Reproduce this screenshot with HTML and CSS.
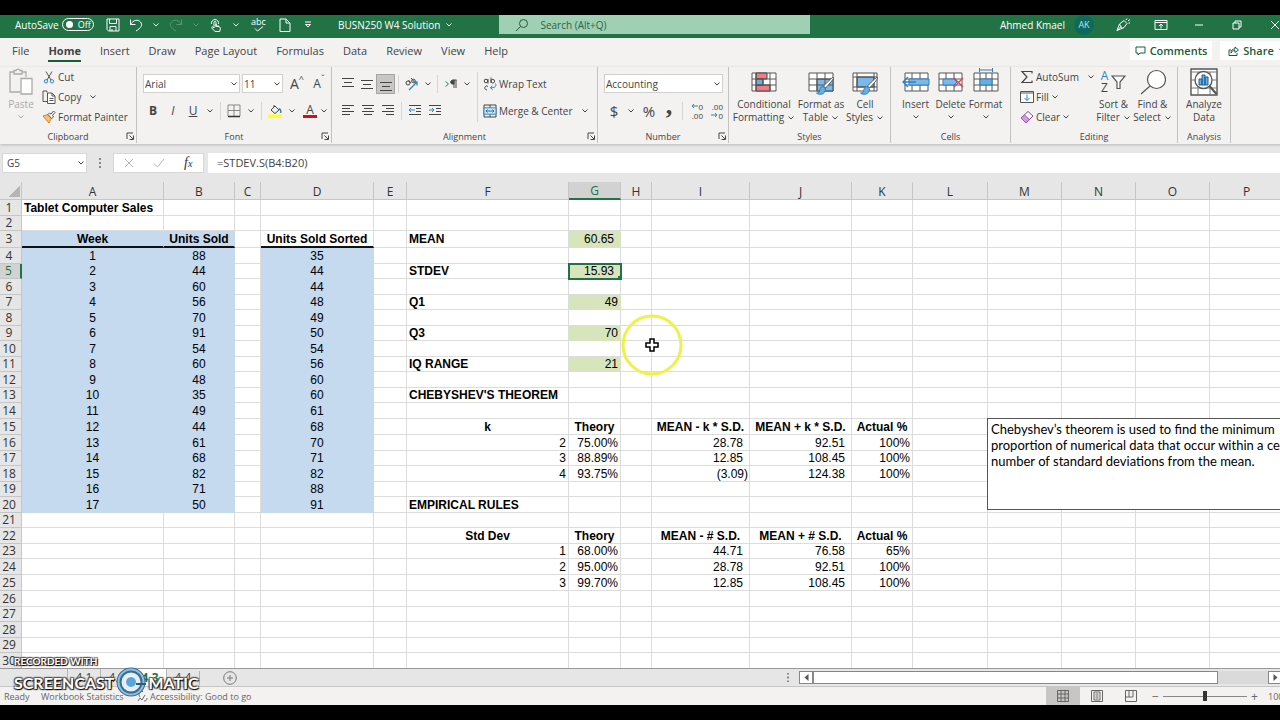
FILE: index.html
```html
<!DOCTYPE html>
<html lang="en">
<head>
    <meta charset="UTF-8">
    <meta name="viewport" content="width=device-width, initial-scale=1.0">
    <title>BUSN250 W4 Solution</title>
    <link rel="stylesheet" href="styles.css">
    <script src="script.js" defer></script>
</head>
<body>
    <!-- Shared icons -->
    <svg class="defs" aria-hidden="true">
        <symbol id="chev" viewBox="0 0 8 6"><path d="M1.5 1.5 4 4l2.500-2.500" fill="none" stroke="currentColor"/></symbol>
        <symbol id="launch" viewBox="0 0 9 9"><path d="M1 7V1h6M3.500 3.500 7 7M7.500 3.500v4h-4" fill="none" stroke="currentColor"/></symbol>
        <symbol id="brush" viewBox="0 0 20 20"><path d="M18.500 1.500c1 1-6 8.500-8 10.500l-2-2c2-2 9-9.500 10-8.500Z" fill="#fff" stroke="#555"/><path d="M8 10.500c-3 0-3 3-3.500 5-.5 1.500-2 1.500-3 1.500 3 2.500 9 1.500 9-4Z" fill="#6aaee0" stroke="#2f7fc1"/></symbol>
    </svg>

    <div class="app">
        <header class="titlebar">
            <label class="autosave">AutoSave <input type="checkbox" class="switch"><span class="pill"><i></i>Off</span></label>
            <div class="quick">
                <button class="q" aria-label="Save"><svg width="14" height="14" viewBox="0 0 14 14"><path d="M1 1h12v12H2.500L1 11.500ZM3.500 1v4.500h7V1M4 13V8.500h6V13M6 13v-2"/></svg></button>
                <button class="q" aria-label="Undo"><svg width="14" height="14" viewBox="0 0 14 14"><path d="M1.500 1.500v5h5M1.500 6.500C4 2 9 1 11.500 4s.5 6-4.500 9"/></svg></button>
                <button class="q slim" aria-label="Undo list"><svg width="8" height="6"><use href="#chev"/></svg></button>
                <button class="q dim" aria-label="Redo"><svg width="14" height="14" viewBox="0 0 14 14"><path d="M12.500 1.500v5h-5M12.500 6.500C10 2 5 1 2.500 4s-.5 6 4.500 9"/></svg></button>
                <button class="q slim dim" aria-label="Redo list"><svg width="8" height="6"><use href="#chev"/></svg></button>
                <button class="q" aria-label="Touch mode"><svg width="14" height="14" viewBox="0 0 14 14"><path d="M5 10V4.500c0-1.500 2-1.500 2 0V8l3.500 1c1 .3 1 1 .8 2l-.6 2.500H6L2.800 10c-.5-1 .7-1.500 1.200-1ZM2.500 6a3.600 3.600 0 1 1 7 0M7 6v3M9 7v2"/></svg></button>
                <button class="q slim" aria-label="Touch mode list"><svg width="8" height="6"><use href="#chev"/></svg></button>
                <button class="q spell" aria-label="Spelling"><span>abc</span><svg width="10" height="6" viewBox="0 0 10 6"><path d="M1 2.500 3.500 5 9 .5"/></svg></button>
                <button class="q" aria-label="New file"><svg width="14" height="14" viewBox="0 0 14 14"><path d="M2 1h6l4 4v8.500H2ZM8 1v4h4"/></svg></button>
                <button class="q" aria-label="Customize toolbar"><svg width="10" height="8" viewBox="0 0 10 8"><path d="M2 1h6M2.500 3.500 5 6l2.500-2.500Z"/></svg></button>
            </div>
            <button class="doc">BUSN250 W4 Solution <svg width="8" height="6"><use href="#chev"/></svg></button>
            <label class="search">
                <svg width="14" height="14" viewBox="0 0 14 14"><circle cx="8.500" cy="5.500" r="4" /><path d="M5.500 8.500 1 13"/></svg>
                <input type="search" placeholder="Search (Alt+Q)" aria-label="Search">
            </label>
            <div class="account">
                <span>Ahmed Kmael</span><span class="avatar">AK</span>
                <button class="w" aria-label="Draw"><svg width="16" height="14" viewBox="0 0 16 14"><path d="M2 12.500 4.500 6 9 2.500l3 3L9 9.500ZM4.500 6 7 11M2 12.500l4-4M11 2l1-1.500M13 3l2-1.500M13.500 5H15"/></svg></button>
                <button class="w" aria-label="Ribbon display"><svg width="14" height="12" viewBox="0 0 14 12"><path d="M1 1.500h12v9H1ZM1 3.500h12M7 9.500V5.500M5 7l2-2 2 2"/></svg></button>
                <button class="w" aria-label="Minimize"><svg width="10" height="10" viewBox="0 0 10 10"><path d="M1 5h8"/></svg></button>
                <button class="w" aria-label="Restore"><svg width="10" height="10" viewBox="0 0 10 10"><path d="M1 3h6v6H1ZM3 3V1h6v6H7"/></svg></button>
                <button class="w" aria-label="Close"><svg width="10" height="10" viewBox="0 0 10 10"><path d="m1 1 8 8M9 1 1 9"/></svg></button>
            </div>
        </header>

        <nav class="menu">
            <a href="#">File</a>
            <a href="#" class="active">Home</a>
            <a href="#">Insert</a>
            <a href="#">Draw</a>
            <a href="#">Page Layout</a>
            <a href="#">Formulas</a>
            <a href="#">Data</a>
            <a href="#">Review</a>
            <a href="#">View</a>
            <a href="#">Help</a>
            <button class="pillbtn comments"><svg width="11" height="10" viewBox="0 0 11 10"><path d="M1 1h9v6H5L3 9V7H1Z"/></svg>Comments</button>
            <button class="pillbtn share"><svg width="11" height="10" viewBox="0 0 11 10"><path d="M3 4H1v5.500h8V7M3 7c0-3 1.500-4 4-4V1l3.500 3L7 6.500v-2C5 4.500 4 5.500 3 7Z"/></svg>Share <svg width="8" height="6"><use href="#chev"/></svg></button>
        </nav>

        <div class="ribbon">
            <section class="group clipboard">
                <div class="tools">
                    <button class="big dim"><svg width="26" height="28" viewBox="0 0 26 28"><path d="M6 4H2v20h10M18 9V4h-4M6 2.500h2a2.200 2.200 0 0 1 4 0h2v3.500H6Z" fill="none" stroke="#aaa" stroke-width="1.300"/><path d="M13 10.500h11V26H13Z" fill="#fff" stroke="#aaa" stroke-width="1.300"/></svg>Paste<svg width="8" height="6"><use href="#chev"/></svg></button>
                    <div class="list">
                        <button><svg width="14" height="14" viewBox="0 0 14 14"><path d="M4 1.500 9 10M10 1.500 5 10" stroke="#555"/><circle cx="4" cy="11.300" r="1.700" stroke="#2e86c1"/><circle cx="10" cy="11.300" r="1.700" stroke="#2e86c1"/></svg>Cut</button>
                        <button><svg width="14" height="14" viewBox="0 0 14 14"><path d="M5 2.500V1H1v10.500h4" stroke="#555"/><path d="M5.500 3h4.500l3 3v7.500H5.500ZM10 3v3h3M7.500 8.500h4M7.500 10.500h4" fill="#fff" stroke="#555"/></svg>Copy<svg class="after" width="8" height="6"><use href="#chev"/></svg></button>
                        <button><svg width="14" height="14" viewBox="0 0 14 14"><path d="M1 6 6 4.500 9.500 8 7 13Z" fill="#f6c177" stroke="#d9822b"/><path d="m6 4.500 1.500-1.500 1.500 1.200L11.500 1l1.500 1.500-2.500 2.800L11.500 7 9.500 8.500Z" fill="#fff" stroke="#555"/></svg>Format Painter</button>
                    </div>
                </div>
                <footer><span>Clipboard</span><button aria-label="Clipboard options"><svg width="9" height="9"><use href="#launch"/></svg></button></footer>
            </section>

            <section class="group font">
                <div class="tools rows">
                    <div class="row">
                        <select class="wide" aria-label="Font"><option>Arial</option></select>
                        <select class="narrow" aria-label="Font size"><option>11</option></select>
                        <button class="ic letter" aria-label="Grow font">A<sup>^</sup></button>
                        <button class="ic letter small" aria-label="Shrink font">A<sup>ˇ</sup></button>
                    </div>
                    <div class="row">
                        <button class="ic"><b>B</b></button>
                        <button class="ic"><em>I</em></button>
                        <button class="ic"><u>U</u></button>
                        <button class="ch" aria-label="Underline list"><svg width="8" height="6"><use href="#chev"/></svg></button>
                        <i class="sep"></i>
                        <button class="ic" aria-label="Borders"><svg width="14" height="14" viewBox="0 0 14 14"><path d="M1 1h12v11M1 1v11M7 1v11M1 6.500h12" stroke="#888"/><path d="M1 12.500h12" stroke="#333" stroke-width="1.500"/></svg></button>
                        <button class="ch" aria-label="Borders list"><svg width="8" height="6"><use href="#chev"/></svg></button>
                        <i class="sep"></i>
                        <button class="ic" aria-label="Fill color"><svg width="14" height="14" viewBox="0 0 14 14"><path d="m3 6 4-4 4 4-4 3.500ZM6 3V1" stroke="#444"/><path d="M11 4.500c2 1 2 3 1.500 4.500" stroke="#2e86c1" stroke-width="1.500"/><path d="M0 10.500h14V14H0Z" fill="#ffff20" stroke="none"/></svg></button>
                        <button class="ch" aria-label="Fill list"><svg width="8" height="6"><use href="#chev"/></svg></button>
                        <button class="ic fontcolor">A</button>
                        <button class="ch" aria-label="Font color list"><svg width="8" height="6"><use href="#chev"/></svg></button>
                    </div>
                </div>
                <footer><span>Font</span><button aria-label="Font options"><svg width="9" height="9"><use href="#launch"/></svg></button></footer>
            </section>

            <section class="group align">
                <div class="tools">
                    <div class="rows left">
                        <div class="row">
                            <button class="ic" aria-label="Top align"><svg width="14" height="14" viewBox="0 0 14 14"><path d="M1 1.500h12M3 5.500h8M1 9.500h12"/></svg></button>
                            <button class="ic" aria-label="Middle align"><svg width="14" height="14" viewBox="0 0 14 14"><path d="M1 3.500h12M3 7.500h8M1 11.500h12"/></svg></button>
                            <button class="ic on" aria-label="Bottom align"><svg width="14" height="14" viewBox="0 0 14 14"><path d="M1 5.500h12M3 9.500h8M1 13.500h12"/></svg></button>
                            <i class="sep"></i>
                            <button class="ic" aria-label="Orientation"><svg width="15" height="14" viewBox="0 0 15 14"><circle cx="4" cy="6" r="2"/><path d="m4.500 3 2.500 3M7 1l4 4.500"/><circle cx="9.500" cy="4" r="1.800"/><path d="m5 13 8-8M9.500 5H13v3.500" stroke="#2e86c1" stroke-width="1.300"/></svg></button>
                            <button class="ch" aria-label="Orientation list"><svg width="8" height="6"><use href="#chev"/></svg></button>
                            <i class="sep"></i>
                            <button class="ic" aria-label="Text direction"><svg width="14" height="12" viewBox="0 0 14 12"><path d="m1.500 3.500 3 2.500-3 2.500" stroke="#2e7a6f"/><path d="M12.500 2H9.500M10 2v8M12 2v8"/><path d="M10 2C5.500 1.500 5.500 7 10 6Z" fill="#444"/></svg></button>
                            <button class="ch" aria-label="Text direction list"><svg width="8" height="6"><use href="#chev"/></svg></button>
                        </div>
                        <div class="row">
                            <button class="ic" aria-label="Align left"><svg width="14" height="14" viewBox="0 0 14 14"><path d="M1 1.500h12M1 4.500h8M1 7.500h12M1 10.500h8"/></svg></button>
                            <button class="ic" aria-label="Align center"><svg width="14" height="14" viewBox="0 0 14 14"><path d="M1 1.500h12M3 4.500h8M1 7.500h12M3 10.500h8"/></svg></button>
                            <button class="ic" aria-label="Align right"><svg width="14" height="14" viewBox="0 0 14 14"><path d="M1 1.500h12M5 4.500h8M1 7.500h12M5 10.500h8"/></svg></button>
                            <i class="sep"></i>
                            <button class="ic" aria-label="Decrease indent"><svg width="14" height="14" viewBox="0 0 14 14"><path d="M1 1.500h12M8 4.500h5M8 7.500h5M1 10.500h12"/><path d="M7 6H1m2-2L1 6l2 2" stroke="#2e86c1"/></svg></button>
                            <button class="ic" aria-label="Increase indent"><svg width="14" height="14" viewBox="0 0 14 14"><path d="M1 1.500h12M8 4.500h5M8 7.500h5M1 10.500h12"/><path d="M1 6h5M4 4l2 2-2 2" stroke="#2e86c1"/></svg></button>
                        </div>
                    </div>
                    <i class="sep tall"></i>
                    <div class="rows right">
                        <button class="txt"><svg width="14" height="14" viewBox="0 0 14 14"><circle cx="3" cy="4" r="1.800"/><path d="M5 2v4.500M8 .5V6M5 9.500c-3-2-5 3-1 3.500"/><circle cx="9.800" cy="4.200" r="1.800"/><path d="M12.500 6.500c1.500 3.500-1.500 4.500-5 4.200m2-2.200-2 2.200 2 2.200" stroke="#2e86c1"/></svg>Wrap Text</button>
                        <button class="txt"><svg width="14" height="14" viewBox="0 0 14 14"><path d="M1 1h12v12H1ZM7 1v3M7 10v3"/><path d="M1 3.800h12v6.400H1Z" fill="#d3e7f5" stroke="#2e86c1"/><path d="M3 7h8M4.500 5.500 3 7l1.500 1.500M9.500 5.500 11 7 9.500 8.500" stroke="#1d6fa5"/></svg>Merge &amp; Center<svg class="after" width="8" height="6"><use href="#chev"/></svg></button>
                    </div>
                </div>
                <footer><span>Alignment</span><button aria-label="Alignment options"><svg width="9" height="9"><use href="#launch"/></svg></button></footer>
            </section>

            <section class="group number">
                <div class="tools rows">
                    <div class="row"><select aria-label="Number format"><option>Accounting</option></select></div>
                    <div class="row">
                        <button class="ic sym">$</button>
                        <button class="ch" aria-label="Currency list"><svg width="8" height="6"><use href="#chev"/></svg></button>
                        <button class="ic sym pct">%</button>
                        <button class="ic sym"><b class="comma">,</b></button>
                        <i class="sep"></i>
                        <button class="ic dec" aria-label="Increase decimal"><span><svg width="7" height="6" viewBox="0 0 7 6"><path d="M7 3H1m2-2L1 3l2 2"/></svg>0</span><span>.00</span></button>
                        <button class="ic dec" aria-label="Decrease decimal"><span>.00</span><span><svg width="7" height="6" viewBox="0 0 7 6"><path d="M0 3h6M4 1l2 2-2 2"/></svg>0</span></button>
                    </div>
                </div>
                <footer><span>Number</span><button aria-label="Number options"><svg width="9" height="9"><use href="#launch"/></svg></button></footer>
            </section>

            <section class="group styles">
                <div class="tools">
                    <button class="big"><svg width="26" height="28" viewBox="0 0 26 28"><path d="M1 5h24v18H1Z" fill="#fff" stroke="#555"/><path d="M5 5h11v6H5ZM5 17h14v6H5Z" fill="#f27a84"/><path d="M5 11h7v6H5Z" fill="#6aaee0"/><path d="M1 11h24M1 17h24M5 5v18M19 5v18M12 11v6" fill="none" stroke="#555"/></svg>Conditional<span>Formatting <svg width="8" height="6"><use href="#chev"/></svg></span></button>
                    <button class="big"><svg width="26" height="28" viewBox="0 0 26 28"><path d="M1 5h24v18H1Z" fill="#fff" stroke="#555"/><path d="M9 11h16v12H9Z" fill="#7db9e8"/><path d="M1 11h24M1 17h24M9 5v18M17 5v18" fill="none" stroke="#555"/><use href="#brush" x="7" y="8" width="20" height="20"/></svg>Format as<span>Table <svg width="8" height="6"><use href="#chev"/></svg></span></button>
                    <button class="big"><svg width="26" height="28" viewBox="0 0 26 28"><path d="M1 5h24v18H1Z" fill="#fff" stroke="#555"/><path d="M5 9h17v10H5Z" fill="#7db9e8"/><path d="M1 9h24M1 19h24M5 5v18M22 5v18" fill="none" stroke="#555"/><use href="#brush" x="7" y="8" width="20" height="20"/></svg>Cell<span>Styles <svg width="8" height="6"><use href="#chev"/></svg></span></button>
                </div>
                <footer><span>Styles</span></footer>
            </section>

            <section class="group cells">
                <div class="tools">
                    <button class="big"><svg width="28" height="28" viewBox="0 0 28 28"><path d="M3 5h23v18H3Z" fill="#fff" stroke="#555"/><path d="M3 11h23M3 17h23M10 5v18M18 5v18" fill="none" stroke="#555"/><path d="M7 11h20v6H7Z" fill="#7db9e8" stroke="#2f7fc1"/><path d="M14 14H1m5-5-5 5 5 5" fill="none" stroke="#2f7fc1" stroke-width="1.300"/></svg>Insert<svg width="8" height="6"><use href="#chev"/></svg></button>
                    <button class="big"><svg width="28" height="28" viewBox="0 0 28 28"><path d="M2 5h23v18H2Z" fill="#fff" stroke="#555"/><path d="M2 11h23M2 17h23M9 5v18M17 5v18" fill="none" stroke="#555"/><path d="M6 11h11l3 3-3 3H6Z" fill="#7db9e8" stroke="#2f7fc1"/><path d="m17 10 9 9M26 10l-9 9" fill="none" stroke="#d9434e" stroke-width="1.300"/></svg>Delete<svg width="8" height="6"><use href="#chev"/></svg></button>
                    <button class="big"><svg width="28" height="28" viewBox="0 0 28 28"><path d="M2 5h24v18H2Z" fill="#fff" stroke="#555"/><path d="M2 11h24M2 17h24M8 5v18M20 5v18M14 5v18" fill="none" stroke="#555"/><path d="M8 11h12v6H8Z" fill="#6aaee0" stroke="#2f7fc1"/><path d="M7.500 2h13M7.500 0v4M20.500 0v4" stroke="#2f7fc1"/></svg>Format<svg width="8" height="6"><use href="#chev"/></svg></button>
                </div>
                <footer><span>Cells</span></footer>
            </section>

            <section class="group editing">
                <div class="tools">
                    <div class="list">
                        <button><svg width="14" height="14" viewBox="0 0 14 14"><path d="M12 3.500V1.500H2l5 5.500-5 5.500h10v-2" stroke-width="1.200"/></svg>AutoSum<svg class="after" width="8" height="6"><use href="#chev"/></svg></button>
                        <button><svg width="14" height="14" viewBox="0 0 14 14"><path d="M.5 1.500h13v11H.5ZM.5 3h13" stroke="#555" fill="#fff"/><path d="M7 4.500v6M4.500 8 7 10.500 9.500 8" stroke="#2e86c1"/></svg>Fill <svg width="8" height="6"><use href="#chev"/></svg></button>
                        <button><svg width="14" height="14" viewBox="0 0 14 14"><path d="m1 8 7-6.500L13 6l-7 7Z" fill="#fff" stroke="#7d4a8e"/><path d="m1 8 3.500-3 4.800 4.500L6 13Z" fill="#d59be0" stroke="#a14fb8"/></svg>Clear <svg width="8" height="6"><use href="#chev"/></svg></button>
                    </div>
                    <button class="big"><span class="sortfilter"><span class="az"><b>A</b><b>Z</b></span><svg width="15" height="16" viewBox="0 0 15 16"><path d="M1 2h13L9 8v6.500H6V8Z" fill="#fff" stroke="#555" stroke-width="1.200"/></svg></span>Sort &amp;<span>Filter <svg width="8" height="6"><use href="#chev"/></svg></span></button>
                    <button class="big"><svg width="26" height="28" viewBox="0 0 26 28"><circle cx="16.500" cy="11.500" r="9" fill="#fff" stroke="#555" stroke-width="1.200"/><path d="M10 18 1 26" stroke="#555" stroke-width="1.200"/></svg>Find &amp;<span>Select <svg width="8" height="6"><use href="#chev"/></svg></span></button>
                </div>
                <footer><span>Editing</span></footer>
            </section>

            <section class="group analysis">
                <div class="tools">
                    <button class="big"><svg width="28" height="28" viewBox="0 0 28 28"><path d="M1 1h26v26H1Z" fill="#fff" stroke="#555" stroke-width="1.400"/><path d="M1 4h26M1 12h26M1 20h26M8 4v23M20 4v23" stroke="#777" fill="none"/><circle cx="13.500" cy="12" r="8.500" fill="#fff" stroke="#555" stroke-width="1.300"/><path d="M9 11h3v6H9ZM12 7h3v10h-3ZM15 9h3v8h-3Z" fill="#6aaee0" stroke="#1f5f94"/><path d="m19.500 18 7 8" stroke="#555" stroke-width="2"/></svg>Analyze<span>Data</span></button>
                </div>
                <footer><span>Analysis</span></footer>
            </section>
        </div>

        <div class="formulabar">
            <select class="namebox" aria-label="Name box"><option>G5</option></select>
            <span class="dots"></span>
            <div class="fx">
                <button aria-label="Cancel"><svg width="10" height="10" viewBox="0 0 10 10"><path d="m1 1 8 8M9 1 1 9"/></svg></button>
                <button aria-label="Enter"><svg width="12" height="10" viewBox="0 0 12 10"><path d="m1 5.500 3.500 3.500L11 1"/></svg></button>
                <button class="fn" aria-label="Insert function"><em>f<small>x</small></em></button>
            </div>
            <input class="formula" value="=STDEV.S(B4:B20)" aria-label="Formula">
        </div>

        <main class="sheet">
            <table class="grid">
                <colgroup>
                    <col class="c-row"><col class="c-a"><col class="c-b"><col class="c-c"><col class="c-d"><col class="c-e"><col class="c-f"><col class="c-g"><col class="c-h"><col class="c-i"><col class="c-j"><col class="c-k"><col class="c-l"><col span="4" class="c-std">
                </colgroup>
                <thead><tr id="letters"></tr></thead>
                <tbody id="cells"></tbody>
            </table>
            <p class="textbox">Chebyshev’s theorem is used to find the minimum<br>proportion of numerical data that occur within a certain<br>number of standard deviations from the mean.</p>
            <svg class="cursor" width="62" height="62" viewBox="0 0 62 62" aria-hidden="true">
                <circle cx="31" cy="31" r="29" fill="none" stroke="#f0f04a" stroke-width="3"/>
                <path d="M29 25h4v4h4v4h-4v4h-4v-4h-4v-4h4Z" fill="#fff" stroke="#000" stroke-width="1.500"/>
            </svg>
        </main>

        <div class="tabbar">
            <a href="#">4.1</a>
            <a href="#">4.2</a>
            <a href="#" class="active">4.3</a>
            <a href="#">4.4</a>
            <button class="add" aria-label="New sheet"><svg width="14" height="14" viewBox="0 0 14 14"><circle cx="7" cy="7" r="6.300"/><path d="M7 4v6M4 7h6"/></svg></button>
            <span class="dots"></span>
            <div class="scroll">
                <button aria-label="Scroll left"><svg width="5" height="7" viewBox="0 0 5 7"><path d="M4.500 0v7L.5 3.500Z"/></svg></button>
                <span class="thumb"></span>
                <button class="end" aria-label="Scroll right"><svg width="5" height="7" viewBox="0 0 5 7"><path d="M.5 0v7l4-3.500Z"/></svg></button>
            </div>
        </div>

        <footer class="status">
            <span class="ready">Ready</span>
            <span class="stats">Workbook Statistics</span>
            <span class="access"><svg width="12" height="12" viewBox="0 0 12 12"><path d="M7 1.500C3 1 2 5 4 7M2 3l2-1M2 11l2-3 2 2 3-5M8 11c2 0 3-1 3-3"/></svg>Accessibility: Good to go</span>
            <div class="views">
                <button class="on" aria-label="Normal view"><svg width="12" height="12" viewBox="0 0 12 12"><path d="M.5.5h11v11H.5ZM.5 4h11M.5 8h11M4 .5v11M8 .5v11"/></svg></button>
                <button aria-label="Page layout view"><svg width="12" height="12" viewBox="0 0 12 12"><path d="M.5.5h11v11H.5Z"/><path d="M3 2h6v8H3ZM4.500 4h3M4.500 6h3M4.500 8h3"/></svg></button>
                <button aria-label="Page break view"><svg width="12" height="12" viewBox="0 0 12 12"><path d="M.5.500h11v11H.5ZM4 .5V7h4V.5M.5 7H4"/></svg></button>
            </div>
            <div class="zoom"><button aria-label="Zoom out">−</button><input type="range" min="0" max="200" value="100" aria-label="Zoom"><button aria-label="Zoom in">+</button><span>100%</span></div>
        </footer>
    </div>

    <div class="watermark">
        <small>RECORDED WITH</small>
        <div><span>SCREENCAST</span><svg width="30" height="30" viewBox="0 0 30 30"><circle cx="15" cy="15" r="12" fill="#e4eef5" stroke="#3a6d90" stroke-width="5"/><circle cx="15" cy="15" r="12.500" fill="none" stroke="#8ebfe0" stroke-width="2"/><circle cx="15" cy="15" r="5.500" fill="#5aa5dc"/><path d="M20 17h10" stroke="#2d5d7d" stroke-width="2"/></svg><span>MATIC</span></div>
    </div>
</body>
</html>
```
FILE: styles.css
```css
* {
    box-sizing: border-box;
}
body {
    margin: 0;
    padding: 15px 0;
    height: 100vh;
    background: #000;
    overflow: hidden;
    font-family: "Open Sans", "Noto Sans", sans-serif;
    font-size: 10px;
    color: #444;
}
button, input, select {
    font: inherit;
    color: inherit;
    background: none;
    border: 0;
    margin: 0;
    padding: 0;
}
button {
    display: flex;
    align-items: center;
    justify-content: center;
    white-space: nowrap;
}
a {
    color: inherit;
    text-decoration: none;
}
svg {
    display: block;
    flex: none;
    fill: none;
    stroke: currentColor;
}
.defs {
    position: absolute;
    width: 0;
    height: 0;
}
/* the window runs a little past the right edge of the screen */
.app {
    display: flex;
    flex-direction: column;
    width: calc(100% + 14px);
    height: 100%;
    background: #e6e6e6;
}

/* Title bar */
.titlebar {
    display: flex;
    align-items: center;
    height: 23px;
    padding-left: 15px;
    background: #217346;
    color: #fff;
    padding-bottom: 4px;
}
.autosave {
    display: flex;
    align-items: center;
    gap: 3px;
    width: 86px;
}
.switch {
    position: absolute;
    opacity: 0;
}
.pill {
    display: flex;
    align-items: center;
    gap: 5px;
    width: 32px;
    height: 13px;
    padding-left: 3px;
    border: 1px solid #fff;
    border-radius: 7px;
    font-size: 9px;
}
.pill i {
    width: 7px;
    height: 7px;
    border-radius: 50%;
    background: #fff;
}
.quick {
    display: flex;
    align-items: center;
    width: 237px;
}
.q {
    width: 23px;
    height: 18px;
}
.q.slim {
    width: 17px;
}
.q.dim {
    opacity: 0.25;
}
.spell {
    flex-direction: column;
    width: 29px;
    font-size: 9px;
    line-height: 8px;
}
.doc {
    gap: 5px;
}
.search {
    display: flex;
    align-items: center;
    gap: 11px;
    width: 311px;
    height: 19px;
    margin-left: 46px;
    padding-left: 16px;
    background: #a0d0b4;
    color: #1f5a3a;
}
.search input {
    flex: 1;
    outline: none;
}
.search input::placeholder {
    color: #2b6446;
    opacity: 1;
}
.account {
    display: flex;
    align-items: center;
    margin-left: auto;
}
.avatar {
    width: 20px;
    margin: 0 10px 0 9px;
    border-radius: 50%;
    background: #0b6a5b;
    color: #b8e6ea;
    font-size: 9px;
    line-height: 20px;
    text-align: center;
}
.w {
    width: 38px;
    height: 18px;
}

/* Menu */
.menu {
    display: flex;
    align-items: center;
    gap: 19px;
    height: 29px;
    padding-left: 12px;
    padding-bottom: 4px;
    background: #f3f2f1;
    font-size: 11px;
}
.menu a {
    padding: 3px 0 1px;
    border-bottom: 2px solid transparent;
    line-height: 16px;
}
.menu .active {
    font-weight: bold;
    border-color: #185c37;
}
.pillbtn {
    gap: 4px;
    height: 19px;
    background: #fff;
    color: #185c37;
    font-weight: 600;
}
.comments {
    width: 82px;
    margin-left: auto;
}
.share {
    width: 74px;
    margin-left: -11px;
}

/* Ribbon */
.ribbon {
    display: flex;
    height: 77px;
    background: #f3f2f1;
    box-shadow: 0 1px 3px #bbb;
    position: relative;
}
.group {
    display: flex;
    flex-direction: column;
    border-right: 1px solid #c4c2c0;
    margin-bottom: 1px;
}
.tools {
    display: flex;
    flex: 1;
}
.group footer {
    display: flex;
    height: 13px;
    line-height: 13px;
    font-size: 9px;
}
.group footer span {
    flex: 1;
    text-align: center;
}
.group footer button {
    width: 12px;
    margin-left: -12px;
}
.clipboard { width: 137px; }
.font { width: 195px; }
.align { width: 266px; }
.number { width: 131px; }
.styles { width: 162px; }
.cells { width: 120px; }
.editing { width: 167px; }
.analysis { width: 53px; }

.big {
    flex-direction: column;
    justify-content: flex-start;
    padding-top: 1px;
    line-height: 13px;
    text-align: center;
}
.big > svg:first-child {
    margin-bottom: 2px;
}
.big > span {
    display: flex;
    align-items: center;
    gap: 3px;
}
.big.dim {
    width: 42px;
    color: #aaa;
}
.big > svg:last-child {
    margin-top: 3px;
}
.list {
    display: flex;
    flex-direction: column;
}
.list button {
    justify-content: flex-start;
    height: 20px;
    gap: 2px;
}
.after {
    margin-left: 6px;
}
.rows {
    display: flex;
    flex-direction: column;
    padding-top: 3px;
}
.row {
    display: flex;
    align-items: center;
    height: 27px;
}
.font .rows {
    padding-left: 6px;
}
.ribbon select {
    height: 19px;
    padding-left: 1px;
    border: 1px solid #d2d0ce;
}
select {
    appearance: none;
    background: #fff url("data:image/svg+xml,%3Csvg xmlns='http://www.w3.org/2000/svg' width='8' height='6'%3E%3Cpath d='M1.500 1.500 4 4l2.500-2.500' fill='none' stroke='%23444'/%3E%3C/svg%3E") no-repeat right 1px center;
}
.wide {
    width: 97px;
    margin-right: 2px;
}
.narrow {
    width: 41px;
    margin-right: 3px;
}
.ic {
    width: 20px;
    height: 20px;
    font-size: 12px;
}
.ch {
    width: 14px;
    height: 20px;
}
.letter {
    width: 22px;
    font-size: 14px;
}
.letter.small {
    font-size: 12px;
}
.letter sup {
    align-self: flex-start;
    font-size: 9px;
    line-height: 10px;
}
.sep {
    width: 1px;
    height: 18px;
    margin: 0 3px;
    background: #d8d6d4;
}
.sep.tall {
    height: 50px;
    margin-top: 5px;
}
.fontcolor {
    width: 14px;
    height: 14px;
    margin-left: 4px;
    border-bottom: 3px solid #d60c1a;
    line-height: 11px;
}
.left {
    width: 142px;
    padding-left: 6px;
}
.on {
    background: #c8c6c4;
}
.ic.on {
    width: 19px;
    border: 1px solid #a6a4a2;
}
.right {
    padding-left: 2px;
}
.txt {
    justify-content: flex-start;
    gap: 2px;
    height: 27px;
}
.number .rows {
    padding-left: 6px;
}
.number select {
    width: 119px;
}
.sym {
    font-size: 15px;
}
.pct {
    margin-left: 1px;
}
.comma {
    font-family: "Liberation Serif", serif;
    font-size: 26px;
    line-height: 10px;
    padding-bottom: 10px;
}
.dec {
    flex-direction: column;
    align-items: flex-end;
    padding-right: 3px;
    font-size: 8px;
    line-height: 9px;
}
.dec span {
    display: flex;
    align-items: center;
    height: 9px;
}
.dec svg {
    stroke: #2e8a9a;
}
.styles .tools, .cells .tools {
    justify-content: center;
}
.styles .big {
    width: 44px;
}
.styles .big:first-child {
    width: 64px;
    margin-right: 3px;
}
.cells .big {
    width: 35px;
}
.editing .tools {
    padding-left: 9px;
}
.editing .list {
    width: 74px;
}
.editing .big {
    width: 39px;
}
.sortfilter {
    height: 28px;
    margin-bottom: 2px;
}
.az {
    display: flex;
    flex-direction: column;
    font-size: 12px;
    line-height: 12px;
}
.az b {
    font-weight: normal;
}
.az b:first-child {
    color: #2e86c1;
}
.analysis .tools {
    justify-content: center;
}

/* Formula bar */
.formulabar {
    display: flex;
    align-items: center;
    height: 38px;
    padding: 0 0 1px 2px;
}
.formulabar > * {
    height: 20px;
}
.namebox {
    width: 85px;
    padding-left: 4px;
    border: 1px solid #d8d8d8;
}
.dots {
    width: 26px;
    background: radial-gradient(circle, #888 1px, transparent 1px) center / 26px 4px;
    background-clip: content-box;
    padding: 4px 0;
}
.fx {
    display: flex;
    width: 91px;
    background: #fff;
    border: 1px solid #d8d8d8;
    color: #b5b5b5;
}
.fx button {
    flex: 1;
}
.fn {
    color: #333;
    font-family: "Liberation Serif", serif;
    font-size: 14px;
}
.fn small {
    font-size: 10px;
}
.formula {
    flex: 1;
    margin-left: 4px;
    padding-left: 9px;
    background: #fff;
    font-size: 11px;
}

/* Sheet */
.sheet {
    position: relative;
    flex: 1;
    min-height: 0;
    overflow: hidden;
}
.grid {
    table-layout: fixed;
    width: 1284px;
    border-collapse: separate;
    border-spacing: 0;
    background: #fff;
    color: #000;
    font-family: "Liberation Sans", Arial, sans-serif;
    font-size: 12px;
    line-height: 14px;
}
.c-row { width: 22px; }
.c-a { width: 142px; }
.c-b { width: 71px; }
.c-c { width: 26px; }
.c-d { width: 113px; }
.c-e { width: 33px; }
.c-f { width: 162px; }
.c-g { width: 52px; }
.c-h { width: 31px; }
.c-i { width: 98px; }
.c-j { width: 102px; }
.c-k { width: 61px; }
.c-l { width: 75px; }
.c-std { width: 74px; }

.grid th, .grid td {
    height: 15px;
    padding: 0 2px;
    border-right: 1px solid #dcdcdc;
    border-bottom: 1px solid #dcdcdc;
    white-space: nowrap;
    overflow: visible;
}
.grid th {
    padding: 0;
    background: #e6e6e6;
    border-color: #c6c6c6;
    color: #333;
    font-family: "Open Sans", sans-serif;
    font-weight: normal;
    text-align: center;
}
.grid tbody th {
    padding-right: 3px;
}
.grid thead th {
    height: 17px;
    padding-top: 2px;
}
.grid .corner {
    background: linear-gradient(135deg, transparent 50%, #b5b5b5 50%) 8px 3px / 12px 12px no-repeat #e6e6e6;
}
.grid tbody tr:nth-child(odd) > * { height: 15px; }
.grid tbody tr:nth-child(even) > * { height: 16px; }
.grid tbody tr:nth-child(10n+15) > * { height: 16px; }
.grid tbody tr:nth-child(1) > * { height: 16px; }
.grid tbody tr:nth-child(2) > * { height: 15px; }
.grid tbody tr:nth-child(3) > * { height: 17px; }

.grid th.sel {
    background: #d2d2d2;
    color: #217346;
}
.grid thead .sel {
    border-bottom: 2px solid #217346;
}
.grid tbody .sel {
    border-right: 2px solid #217346;
}
.grid .bold { font-weight: bold; }
.grid .center { text-align: center; }
.grid .num { text-align: right; }
.grid .acc { text-align: right; padding-right: 6px; }
.grid .neg { text-align: right; padding-right: 1px; }
.grid .blue { background: #c5d9ef; border-color: #c5d9ef; }
.grid .green { background: #d8e4bc; border-color: #d8e4bc; }
.grid .head { border-bottom: 2px solid #111; }
.grid .current {
    position: relative;
    outline: 2px solid #217346;
    outline-offset: -1px;
}
.current::after {
    content: "";
    position: absolute;
    right: -2px;
    bottom: -2px;
    width: 4px;
    height: 4px;
    background: #217346;
}
.textbox {
    position: absolute;
    left: 987px;
    top: 236px;
    width: 340px;
    height: 92px;
    margin: 0;
    padding: 2px 3px;
    background: #fff;
    border: 1px solid #555;
    color: #000;
    font-family: Lato, sans-serif;
    font-size: 13px;
    line-height: 16px;
    white-space: nowrap;
}
.cursor {
    position: absolute;
    left: 621px;
    top: 132px;
}

/* Sheet tabs */
.tabbar {
    display: flex;
    align-items: center;
    height: 19px;
    padding-left: 67px;
    border-top: 1px solid #999;
    border-bottom: 1px solid #c6c6c6;
    font-size: 12px;
}
.tabbar a {
    width: 33px;
    border-left: 1px solid #b5b5b5;
    line-height: 17px;
    text-align: center;
}
.tabbar .active {
    background: #fff;
    color: #217346;
    font-weight: bold;
}
.add {
    width: 60px;
    border-left: 1px solid #b5b5b5;
    color: #777;
}
.tabbar .dots {
    height: 17px;
    margin-left: auto;
}
.scroll {
    display: flex;
    width: 495px;
    height: 13px;
    margin-left: -2px;
    background: #dadada;
}
.scroll button {
    width: 14px;
    background: #fff;
    border: 1px solid #888;
}
.scroll svg {
    fill: #555;
    stroke: none;
}
.thumb {
    width: 405px;
    background: #fff;
    border: 1px solid #888;
}
.scroll .end {
    margin-left: auto;
    width: 26px;
    padding-right: 12px;
}

/* Status bar */
.status {
    display: flex;
    align-items: center;
    height: 18px;
    padding-left: 4px;
    background: #f3f2f1;
    font-size: 9px;
    color: #666;
}
.ready {
    width: 37px;
}
.stats {
    width: 95px;
}
.access {
    display: flex;
    gap: 2px;
}
.views {
    display: flex;
    margin-left: auto;
}
.views button {
    width: 34px;
    height: 18px;
}
.zoom {
    display: flex;
    align-items: center;
    width: 146px;
}
.zoom button {
    width: 15px;
    font-size: 12px;
}
.zoom span {
    margin-left: 6px;
}
.zoom input {
    appearance: none;
    width: 84px;
    height: 12px;
    background: linear-gradient(#888, #888) center / 100% 1px no-repeat;
}
.zoom input::-webkit-slider-thumb {
    appearance: none;
    width: 4px;
    height: 10px;
    background: #333;
}

/* Recorder badge */
.watermark {
    position: absolute;
    left: 14px;
    top: 655px;
    color: #fff;
    font-family: Lato, sans-serif;
    font-weight: bold;
    text-shadow: 1px 1px 1px #000, -1px -1px 1px #555, 1px -1px 1px #555, -1px 1px 1px #555;
}
.watermark small {
    display: block;
    font-size: 10px;
    line-height: 12px;
}
.watermark div {
    display: flex;
    align-items: center;
    gap: 2px;
    font-size: 16px;
}
```
FILE: script.js
```js
const columns = "ABCDEFGHIJKLMNOP".split("");
const units = [88, 44, 60, 56, 70, 91, 54, 60, 48, 35, 49, 44, 61, 68, 82, 71, 50];
const sorted = [...units].sort((a, b) => a - b);

// address: [text, classes]
const cells = {
    A1: ["Tablet Computer Sales", "bold"],
    A3: ["Week", "bold center blue head"],
    B3: ["Units Sold", "bold center blue head"],
    D3: ["Units Sold Sorted", "bold center head"],
    F3: ["MEAN", "bold"], G3: ["60.65", "acc green"],
    F5: ["STDEV", "bold"], G5: ["15.93", "acc green current"],
    F7: ["Q1", "bold"], G7: ["49", "num green"],
    F9: ["Q3", "bold"], G9: ["70", "num green"],
    F11: ["IQ RANGE", "bold"], G11: ["21", "num green"],
    F13: ["CHEBYSHEV'S THEOREM", "bold"],
    F20: ["EMPIRICAL RULES", "bold"],
    I18: ["(3.09)", "neg"]
};

units.forEach((value, i) => {
    cells["A" + (i + 4)] = [i + 1, "center blue"];
    cells["B" + (i + 4)] = [value, "center blue"];
    cells["D" + (i + 4)] = [sorted[i], "center blue"];
});

// Fills F, G, I, J and K of one row
function addRow(row, values, classes) {
    ["F", "G", "I", "J", "K"].forEach((col, i) => {
        if (!cells[col + row]) cells[col + row] = [values[i], classes[i]];
    });
}

const head = Array(5).fill("bold center");
const body = ["num", "num", "acc", "acc", "num"];
addRow(15, ["k", "Theory", "MEAN - k * S.D.", "MEAN + k * S.D.", "Actual %"], head);
addRow(16, ["2", "75.00%", "28.78", "92.51", "100%"], body);
addRow(17, ["3", "88.89%", "12.85", "108.45", "100%"], body);
addRow(18, ["4", "93.75%", "", "124.38", "100%"], body);
addRow(22, ["Std Dev", "Theory", "MEAN - # S.D.", "MEAN + # S.D.", "Actual %"], head);
addRow(23, ["1", "68.00%", "44.71", "76.58", "65%"], body);
addRow(24, ["2", "95.00%", "28.78", "92.51", "100%"], body);
addRow(25, ["3", "99.70%", "12.85", "108.45", "100%"], body);

document.getElementById("letters").innerHTML = '<th class="corner"></th>' +
    columns.map(c => `<th class="${c === "G" ? "sel" : ""}">${c}</th>`).join("");

let html = "";
for (let row = 1; row <= 30; row++) {
    html += `<tr><th class="${row === 5 ? "sel" : ""}">${row}</th>`;
    for (const col of columns) {
        const [text, cls] = cells[col + row] || ["", ""];
        html += `<td class="${cls}">${text}</td>`;
    }
    html += "</tr>";
}
document.getElementById("cells").innerHTML = html;
```
